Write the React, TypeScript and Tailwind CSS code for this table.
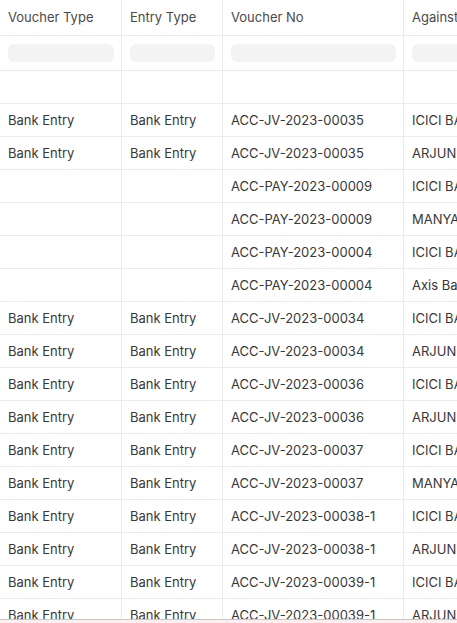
import React from 'react';

const rows: [string, string, string, string, boolean?][] = [
  ['Bank Entry', 'Bank Entry', 'ACC-JV-2023-00035', 'ICICI BA'],
  ['Bank Entry', 'Bank Entry', 'ACC-JV-2023-00035', 'ARJUN', true],
  ['', '', 'ACC-PAY-2023-00009', 'ICICI BA'],
  ['', '', 'ACC-PAY-2023-00009', 'MANYA'],
  ['', '', 'ACC-PAY-2023-00004', 'ICICI BA'],
  ['', '', 'ACC-PAY-2023-00004', 'Axis Ba'],
  ['Bank Entry', 'Bank Entry', 'ACC-JV-2023-00034', 'ICICI BA'],
  ['Bank Entry', 'Bank Entry', 'ACC-JV-2023-00034', 'ARJUN', true],
  ['Bank Entry', 'Bank Entry', 'ACC-JV-2023-00036', 'ICICI BA'],
  ['Bank Entry', 'Bank Entry', 'ACC-JV-2023-00036', 'ARJUN', true],
  ['Bank Entry', 'Bank Entry', 'ACC-JV-2023-00037', 'ICICI BA'],
  ['Bank Entry', 'Bank Entry', 'ACC-JV-2023-00037', 'MANYA'],
  ['Bank Entry', 'Bank Entry', 'ACC-JV-2023-00038-1', 'ICICI BA'],
  ['Bank Entry', 'Bank Entry', 'ACC-JV-2023-00038-1', 'ARJUN', true],
  ['Bank Entry', 'Bank Entry', 'ACC-JV-2023-00039-1', 'ICICI BA'],
  ['Bank Entry', 'Bank Entry', 'ACC-JV-2023-00039-1', 'ARJUN', true],
];

const cols = ['w-[122px]', 'w-[101px]', 'w-[181px]', 'w-[220px]'];
const cell = 'shrink-0 border-r border-b border-[#ebebeb] px-2 flex items-center whitespace-nowrap overflow-hidden';

export default function App() {
  return (
    <div className="h-[623px] w-[457px] overflow-hidden flex flex-col bg-white text-[13px] text-[#383838]" style={{ fontFamily: 'Inter, "Noto Sans", sans-serif' }}>
      <div className="flex-1 min-h-0 overflow-hidden">
        {/* header */}
        <div className="flex h-[36px] text-[#4a4a4a]">
          {['Voucher Type', 'Entry Type', 'Voucher No', 'Against'].map((h, i) => (
            <div key={h} className={`${cell} ${cols[i]}`}>{h}</div>
          ))}
        </div>
        {/* filters */}
        <div className="flex h-[35px]">
          {cols.map((w, i) => (
            <div key={i} className={`${cell} ${w} pr-[7px]`}>
              <div className="h-[18px] w-full rounded-md bg-[#f3f3f4]" />
            </div>
          ))}
        </div>
        <div className="flex h-[33px]">
          {cols.map((w, i) => <div key={i} className={`${cell} ${w}`} />)}
        </div>
        {rows.map((r, i) => (
          <div key={i} className="flex h-[33px]">
            <div className={`${cell} ${cols[0]} pt-[2px]`}>{r[0]}</div>
            <div className={`${cell} ${cols[1]} pt-[2px]`}>{r[1]}</div>
            <div className={`${cell} ${cols[2]} pt-[2px]`}>{r[2]}</div>
            <div className={`${cell} ${cols[3]} pt-[2px]`}>
              {r[3]}
              {r[4] && <span className="text-[#f0a35a]">E</span>}
            </div>
          </div>
        ))}
      </div>
      <div className="h-[4px] shrink-0 border-t border-[#f3b3bd] bg-[#fdeef0]" />
    </div>
  );
}
